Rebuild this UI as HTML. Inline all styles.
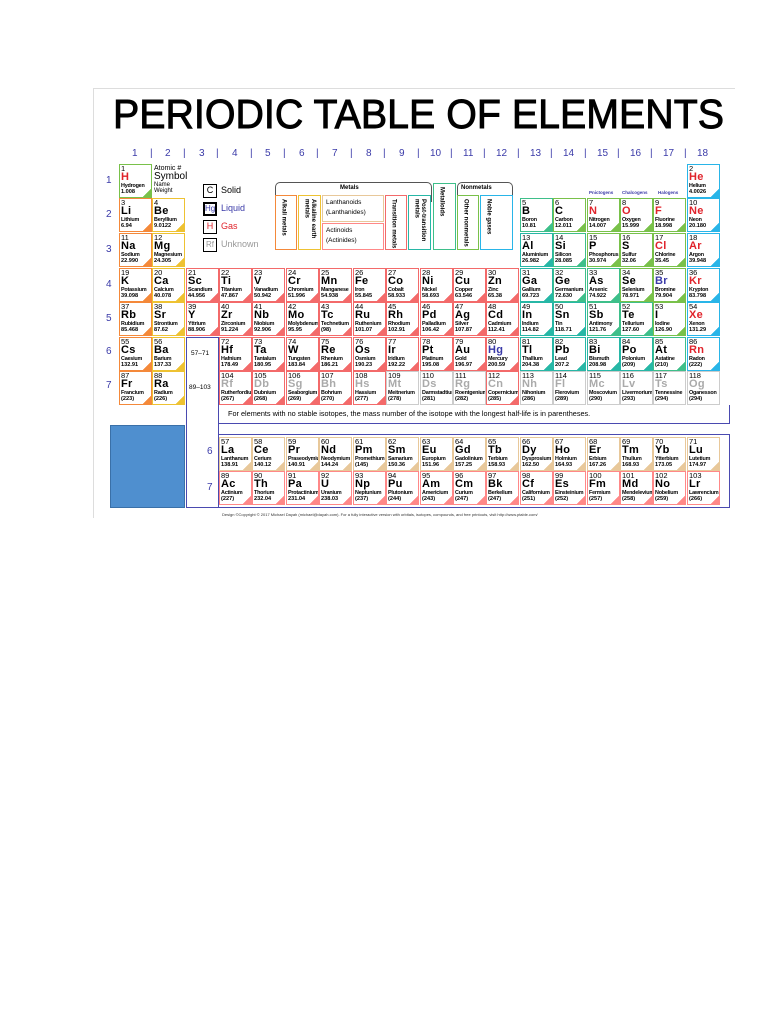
<!DOCTYPE html>
<html><head><meta charset="utf-8">
<style>
*{margin:0;padding:0;box-sizing:border-box}
body{width:768px;height:1024px;background:#fff;position:relative;overflow:hidden;font-family:"Liberation Sans",sans-serif;color:#000}
.a{position:absolute}
.c{position:absolute;width:33px;height:34px;border:1.5px solid #f36a6a;background:linear-gradient(135deg,#fff 87%,#f36a6a 87%);overflow:hidden;line-height:1}
.c b{position:absolute;left:1px;top:0px;font-size:7.5px;font-weight:normal}
.c i{position:absolute;left:1px;top:7px;font-size:11px;font-weight:bold;font-style:normal;letter-spacing:.3px}
.c s{position:absolute;left:1px;top:19px;font-size:5.4px;text-decoration:none;white-space:nowrap;letter-spacing:-.2px;font-weight:bold}
.c u{position:absolute;left:1px;top:25px;font-size:5.6px;text-decoration:none;font-weight:bold}
.al{border-color:#f4893a;background:linear-gradient(135deg,#fff 87%,#f4893a 87%)}
.ae{border-color:#eec232;background:linear-gradient(135deg,#fff 87%,#eec232 87%)}
.pt{border-color:#27b7a6;background:linear-gradient(135deg,#fff 87%,#27b7a6 87%)}
.md{border-color:#3ebf8a;background:linear-gradient(135deg,#fff 87%,#3ebf8a 87%)}
.nm{border-color:#79c14a;background:linear-gradient(135deg,#fff 87%,#79c14a 87%)}
.ng{border-color:#29b5e8;background:linear-gradient(135deg,#fff 87%,#29b5e8 87%)}
.ln{border-color:#e8c89a;background:linear-gradient(135deg,#fff 87%,#e8c89a 87%)}
.ac{border-color:#f88;background:linear-gradient(135deg,#fff 87%,#f88 87%)}
.uk{border-color:#ccc;background:#fff}
.g i{color:#e0232b}.q i{color:#3a3aa8}.u i{color:#aaa}
.gn{position:absolute;top:148px;font-size:10px;color:#3a3aa8}
.pn{position:absolute;left:106px;font-size:10px;color:#3a3aa8}
.vb{position:absolute;border:1.5px solid;background:#fff}
.vt{position:absolute;writing-mode:vertical-rl;font-size:6px;font-weight:bold;left:4px;top:3px;line-height:1.1}
</style></head><body>
<div class="a" style="left:93px;top:88px;width:642px;height:1px;background:#ddd"></div>
<div class="a" style="left:93px;top:88px;width:1px;height:430px;background:#ddd"></div>
<svg class="a" style="left:0;top:0" width="768" height="140"><text x="113" y="128" textLength="611" lengthAdjust="spacingAndGlyphs" font-family="Liberation Sans" font-size="41" stroke="#000" stroke-width="0.9">PERIODIC TABLE OF ELEMENTS</text></svg>

<div class="gn" style="left:132px">1</div><div class="gn" style="left:165px">2</div><div class="gn" style="left:199px">3</div><div class="gn" style="left:232px">4</div><div class="gn" style="left:265px">5</div><div class="gn" style="left:299px">6</div><div class="gn" style="left:332px">7</div><div class="gn" style="left:366px">8</div><div class="gn" style="left:399px">9</div><div class="gn" style="left:430px">10</div><div class="gn" style="left:463px">11</div><div class="gn" style="left:496px">12</div><div class="gn" style="left:530px">13</div><div class="gn" style="left:563px">14</div><div class="gn" style="left:597px">15</div><div class="gn" style="left:630px">16</div><div class="gn" style="left:663px">17</div><div class="gn" style="left:697px">18</div>
<div class="gn" style="left:150px">|</div><div class="gn" style="left:183px">|</div><div class="gn" style="left:216px">|</div><div class="gn" style="left:250px">|</div><div class="gn" style="left:283px">|</div><div class="gn" style="left:316px">|</div><div class="gn" style="left:350px">|</div><div class="gn" style="left:383px">|</div><div class="gn" style="left:417px">|</div><div class="gn" style="left:450px">|</div><div class="gn" style="left:483px">|</div><div class="gn" style="left:517px">|</div><div class="gn" style="left:550px">|</div><div class="gn" style="left:584px">|</div><div class="gn" style="left:617px">|</div><div class="gn" style="left:650px">|</div><div class="gn" style="left:684px">|</div>

<div class="pn" style="top:175px">1</div><div class="pn" style="top:209px">2</div><div class="pn" style="top:244px">3</div><div class="pn" style="top:279px">4</div><div class="pn" style="top:313px">5</div><div class="pn" style="top:346px">6</div><div class="pn" style="top:380px">7</div>
<div class="pn" style="left:207px;top:446px">6</div><div class="pn" style="left:207px;top:482px">7</div>

<div class="a" style="left:154px;top:165px;font-size:7px;line-height:1">Atomic #</div>
<div class="a" style="left:154px;top:172px;font-size:10px;line-height:1">Symbol</div>
<div class="a" style="left:154px;top:182px;font-size:6px;line-height:1">Name<br>Weight</div>
<div class="a" style="left:203px;top:184px;width:14px;height:14px;border:1.5px solid #000;font-size:9px;text-align:center;line-height:11px">C</div><div class="a" style="left:221px;top:185px;font-size:9px">Solid</div>
<div class="a" style="left:203px;top:202px;width:14px;height:14px;border:2px solid #000;font-size:8px;text-align:center;line-height:10px;color:#3a3aa8">Hg</div><div class="a" style="left:221px;top:203px;font-size:9px;color:#3a3aa8">Liquid</div>
<div class="a" style="left:203px;top:220px;width:14px;height:14px;border:1.5px solid #000;font-size:9px;text-align:center;line-height:11px;color:#e0232b">H</div><div class="a" style="left:221px;top:221px;font-size:9px;color:#e0232b">Gas</div>
<div class="a" style="left:203px;top:238px;width:14px;height:14px;border:1.5px solid #000;font-size:8px;text-align:center;line-height:11px;color:#999">Rf</div><div class="a" style="left:221px;top:239px;font-size:9px;color:#999">Unknown</div>

<div class="a" style="left:275px;top:182px;width:157px;height:20px;border:1.5px solid #555;border-bottom:none;border-radius:5px 5px 0 0"></div>
<div class="a" style="left:340px;top:185px;font-size:6px;font-weight:bold">Metals</div>
<div class="a" style="left:457px;top:182px;width:56px;height:20px;border:1.5px solid #555;border-bottom:none;border-radius:5px 5px 0 0"></div>
<div class="a" style="left:461px;top:185px;font-size:6px;font-weight:bold">Nonmetals</div>
<div class="vb" style="left:275px;top:195px;width:22px;height:55px;border-color:#f4893a"><span class="vt">Alkali metals</span></div>
<div class="vb" style="left:298px;top:195px;width:23px;height:55px;border-color:#eec232"><span class="vt">Alkaline earth metals</span></div>
<div class="vb" style="left:322px;top:195px;width:62px;height:27px;border-color:#e8c89a;font-size:6.5px;padding:2px 3px;line-height:1.5">Lanthanoids<br>(Lanthanides)</div>
<div class="vb" style="left:322px;top:223px;width:62px;height:27px;border-color:#f88;font-size:6.5px;padding:2px 3px;line-height:1.5">Actinoids<br>(Actinides)</div>
<div class="vb" style="left:385px;top:195px;width:22px;height:55px;border-color:#f36a6a"><span class="vt">Transition metals</span></div>
<div class="vb" style="left:408px;top:195px;width:23px;height:55px;border-color:#27b7a6"><span class="vt">Post-transition metals</span></div>
<div class="vb" style="left:433px;top:183px;width:23px;height:67px;border-color:#3ebf8a"><span class="vt">Metalloids</span></div>
<div class="vb" style="left:457px;top:195px;width:22px;height:55px;border-color:#79c14a"><span class="vt">Other nonmetals</span></div>
<div class="vb" style="left:480px;top:195px;width:33px;height:55px;border-color:#29b5e8"><span class="vt">Noble gases</span></div>
<div class="a" style="left:589px;top:190px;font-size:4.5px;color:#3a3aa8;font-weight:bold">Pnictogens</div>
<div class="a" style="left:622px;top:190px;font-size:4.5px;color:#3a3aa8;font-weight:bold">Chalcogens</div>
<div class="a" style="left:658px;top:190px;font-size:4.5px;color:#3a3aa8;font-weight:bold">Halogens</div>

<div class="a" style="left:186px;top:337px;width:33px;height:171px;border:1.5px solid #4a4ab0"></div>
<div class="a" style="left:191px;top:350px;font-size:6.5px">57–71</div>
<div class="a" style="left:189px;top:384px;font-size:6.5px">89–103</div>
<div class="a" style="left:218px;top:405px;width:512px;height:19px;border:1.5px solid #4a4ab0;border-top:none"></div>
<div class="a" style="left:228px;top:409px;font-size:7.3px">For elements with no stable isotopes, the mass number of the isotope with the longest half-life is in parentheses.</div>
<div class="a" style="left:218px;top:434px;width:512px;height:74px;border:1.5px solid #4a4ab0"></div>
<div class="a" style="left:110px;top:425px;width:75px;height:83px;background:#4f8fcf;border:1px solid #3a70a8"></div>
<div class="a" style="left:222px;top:512px;font-size:4px;color:#333">Design ©Copyright © 2017 Michael Dayah (michael@dayah.com). For a fully interactive version with orbitals, isotopes, compounds, and free printouts, visit http://www.ptable.com/</div>

<div class="c nm g" style="left:119px;top:164px"><b>1</b><i>H</i><s>Hydrogen</s><u>1.008</u></div>
<div class="c ng g" style="left:687px;top:164px"><b>2</b><i>He</i><s>Helium</s><u>4.0026</u></div>
<div class="c al" style="left:119px;top:198px"><b>3</b><i>Li</i><s>Lithium</s><u>6.94</u></div>
<div class="c ae" style="left:152px;top:198px"><b>4</b><i>Be</i><s>Beryllium</s><u>9.0122</u></div>
<div class="c md" style="left:520px;top:198px"><b>5</b><i>B</i><s>Boron</s><u>10.81</u></div>
<div class="c nm" style="left:553px;top:198px"><b>6</b><i>C</i><s>Carbon</s><u>12.011</u></div>
<div class="c nm g" style="left:587px;top:198px"><b>7</b><i>N</i><s>Nitrogen</s><u>14.007</u></div>
<div class="c nm g" style="left:620px;top:198px"><b>8</b><i>O</i><s>Oxygen</s><u>15.999</u></div>
<div class="c nm g" style="left:653px;top:198px"><b>9</b><i>F</i><s>Fluorine</s><u>18.998</u></div>
<div class="c ng g" style="left:687px;top:198px"><b>10</b><i>Ne</i><s>Neon</s><u>20.180</u></div>
<div class="c al" style="left:119px;top:233px"><b>11</b><i>Na</i><s>Sodium</s><u>22.990</u></div>
<div class="c ae" style="left:152px;top:233px"><b>12</b><i>Mg</i><s>Magnesium</s><u>24.305</u></div>
<div class="c pt" style="left:520px;top:233px"><b>13</b><i>Al</i><s>Aluminium</s><u>26.982</u></div>
<div class="c md" style="left:553px;top:233px"><b>14</b><i>Si</i><s>Silicon</s><u>28.085</u></div>
<div class="c nm" style="left:587px;top:233px"><b>15</b><i>P</i><s>Phosphorus</s><u>30.974</u></div>
<div class="c nm" style="left:620px;top:233px"><b>16</b><i>S</i><s>Sulfur</s><u>32.06</u></div>
<div class="c nm g" style="left:653px;top:233px"><b>17</b><i>Cl</i><s>Chlorine</s><u>35.45</u></div>
<div class="c ng g" style="left:687px;top:233px"><b>18</b><i>Ar</i><s>Argon</s><u>39.948</u></div>
<div class="c al" style="left:119px;top:268px"><b>19</b><i>K</i><s>Potassium</s><u>39.098</u></div>
<div class="c ae" style="left:152px;top:268px"><b>20</b><i>Ca</i><s>Calcium</s><u>40.078</u></div>
<div class="c" style="left:186px;top:268px"><b>21</b><i>Sc</i><s>Scandium</s><u>44.956</u></div>
<div class="c" style="left:219px;top:268px"><b>22</b><i>Ti</i><s>Titanium</s><u>47.867</u></div>
<div class="c" style="left:252px;top:268px"><b>23</b><i>V</i><s>Vanadium</s><u>50.942</u></div>
<div class="c" style="left:286px;top:268px"><b>24</b><i>Cr</i><s>Chromium</s><u>51.996</u></div>
<div class="c" style="left:319px;top:268px"><b>25</b><i>Mn</i><s>Manganese</s><u>54.938</u></div>
<div class="c" style="left:353px;top:268px"><b>26</b><i>Fe</i><s>Iron</s><u>55.845</u></div>
<div class="c" style="left:386px;top:268px"><b>27</b><i>Co</i><s>Cobalt</s><u>58.933</u></div>
<div class="c" style="left:420px;top:268px"><b>28</b><i>Ni</i><s>Nickel</s><u>58.693</u></div>
<div class="c" style="left:453px;top:268px"><b>29</b><i>Cu</i><s>Copper</s><u>63.546</u></div>
<div class="c" style="left:486px;top:268px"><b>30</b><i>Zn</i><s>Zinc</s><u>65.38</u></div>
<div class="c pt" style="left:520px;top:268px"><b>31</b><i>Ga</i><s>Gallium</s><u>69.723</u></div>
<div class="c md" style="left:553px;top:268px"><b>32</b><i>Ge</i><s>Germanium</s><u>72.630</u></div>
<div class="c md" style="left:587px;top:268px"><b>33</b><i>As</i><s>Arsenic</s><u>74.922</u></div>
<div class="c nm" style="left:620px;top:268px"><b>34</b><i>Se</i><s>Selenium</s><u>78.971</u></div>
<div class="c nm q" style="left:653px;top:268px"><b>35</b><i>Br</i><s>Bromine</s><u>79.904</u></div>
<div class="c ng g" style="left:687px;top:268px"><b>36</b><i>Kr</i><s>Krypton</s><u>83.798</u></div>
<div class="c al" style="left:119px;top:302px"><b>37</b><i>Rb</i><s>Rubidium</s><u>85.468</u></div>
<div class="c ae" style="left:152px;top:302px"><b>38</b><i>Sr</i><s>Strontium</s><u>87.62</u></div>
<div class="c" style="left:186px;top:302px"><b>39</b><i>Y</i><s>Yttrium</s><u>88.906</u></div>
<div class="c" style="left:219px;top:302px"><b>40</b><i>Zr</i><s>Zirconium</s><u>91.224</u></div>
<div class="c" style="left:252px;top:302px"><b>41</b><i>Nb</i><s>Niobium</s><u>92.906</u></div>
<div class="c" style="left:286px;top:302px"><b>42</b><i>Mo</i><s>Molybdenum</s><u>95.95</u></div>
<div class="c" style="left:319px;top:302px"><b>43</b><i>Tc</i><s>Technetium</s><u>(98)</u></div>
<div class="c" style="left:353px;top:302px"><b>44</b><i>Ru</i><s>Ruthenium</s><u>101.07</u></div>
<div class="c" style="left:386px;top:302px"><b>45</b><i>Rh</i><s>Rhodium</s><u>102.91</u></div>
<div class="c" style="left:420px;top:302px"><b>46</b><i>Pd</i><s>Palladium</s><u>106.42</u></div>
<div class="c" style="left:453px;top:302px"><b>47</b><i>Ag</i><s>Silver</s><u>107.87</u></div>
<div class="c" style="left:486px;top:302px"><b>48</b><i>Cd</i><s>Cadmium</s><u>112.41</u></div>
<div class="c pt" style="left:520px;top:302px"><b>49</b><i>In</i><s>Indium</s><u>114.82</u></div>
<div class="c pt" style="left:553px;top:302px"><b>50</b><i>Sn</i><s>Tin</s><u>118.71</u></div>
<div class="c md" style="left:587px;top:302px"><b>51</b><i>Sb</i><s>Antimony</s><u>121.76</u></div>
<div class="c md" style="left:620px;top:302px"><b>52</b><i>Te</i><s>Tellurium</s><u>127.60</u></div>
<div class="c nm" style="left:653px;top:302px"><b>53</b><i>I</i><s>Iodine</s><u>126.90</u></div>
<div class="c ng g" style="left:687px;top:302px"><b>54</b><i>Xe</i><s>Xenon</s><u>131.29</u></div>
<div class="c al" style="left:119px;top:337px"><b>55</b><i>Cs</i><s>Caesium</s><u>132.91</u></div>
<div class="c ae" style="left:152px;top:337px"><b>56</b><i>Ba</i><s>Barium</s><u>137.33</u></div>
<div class="c" style="left:219px;top:337px"><b>72</b><i>Hf</i><s>Hafnium</s><u>178.49</u></div>
<div class="c" style="left:252px;top:337px"><b>73</b><i>Ta</i><s>Tantalum</s><u>180.95</u></div>
<div class="c" style="left:286px;top:337px"><b>74</b><i>W</i><s>Tungsten</s><u>183.84</u></div>
<div class="c" style="left:319px;top:337px"><b>75</b><i>Re</i><s>Rhenium</s><u>186.21</u></div>
<div class="c" style="left:353px;top:337px"><b>76</b><i>Os</i><s>Osmium</s><u>190.23</u></div>
<div class="c" style="left:386px;top:337px"><b>77</b><i>Ir</i><s>Iridium</s><u>192.22</u></div>
<div class="c" style="left:420px;top:337px"><b>78</b><i>Pt</i><s>Platinum</s><u>195.08</u></div>
<div class="c" style="left:453px;top:337px"><b>79</b><i>Au</i><s>Gold</s><u>196.97</u></div>
<div class="c q" style="left:486px;top:337px"><b>80</b><i>Hg</i><s>Mercury</s><u>200.59</u></div>
<div class="c pt" style="left:520px;top:337px"><b>81</b><i>Tl</i><s>Thallium</s><u>204.38</u></div>
<div class="c pt" style="left:553px;top:337px"><b>82</b><i>Pb</i><s>Lead</s><u>207.2</u></div>
<div class="c pt" style="left:587px;top:337px"><b>83</b><i>Bi</i><s>Bismuth</s><u>208.98</u></div>
<div class="c pt" style="left:620px;top:337px"><b>84</b><i>Po</i><s>Polonium</s><u>(209)</u></div>
<div class="c md" style="left:653px;top:337px"><b>85</b><i>At</i><s>Astatine</s><u>(210)</u></div>
<div class="c ng g" style="left:687px;top:337px"><b>86</b><i>Rn</i><s>Radon</s><u>(222)</u></div>
<div class="c al" style="left:119px;top:371px"><b>87</b><i>Fr</i><s>Francium</s><u>(223)</u></div>
<div class="c ae" style="left:152px;top:371px"><b>88</b><i>Ra</i><s>Radium</s><u>(226)</u></div>
<div class="c u" style="left:219px;top:371px"><b>104</b><i>Rf</i><s>Rutherfordium</s><u>(267)</u></div>
<div class="c u" style="left:252px;top:371px"><b>105</b><i>Db</i><s>Dubnium</s><u>(268)</u></div>
<div class="c u" style="left:286px;top:371px"><b>106</b><i>Sg</i><s>Seaborgium</s><u>(269)</u></div>
<div class="c u" style="left:319px;top:371px"><b>107</b><i>Bh</i><s>Bohrium</s><u>(270)</u></div>
<div class="c u" style="left:353px;top:371px"><b>108</b><i>Hs</i><s>Hassium</s><u>(277)</u></div>
<div class="c uk u" style="left:386px;top:371px"><b>109</b><i>Mt</i><s>Meitnerium</s><u>(278)</u></div>
<div class="c uk u" style="left:420px;top:371px"><b>110</b><i>Ds</i><s>Darmstadtium</s><u>(281)</u></div>
<div class="c uk u" style="left:453px;top:371px"><b>111</b><i>Rg</i><s>Roentgenium</s><u>(282)</u></div>
<div class="c u" style="left:486px;top:371px"><b>112</b><i>Cn</i><s>Copernicium</s><u>(285)</u></div>
<div class="c uk u" style="left:520px;top:371px"><b>113</b><i>Nh</i><s>Nihonium</s><u>(286)</u></div>
<div class="c uk u" style="left:553px;top:371px"><b>114</b><i>Fl</i><s>Flerovium</s><u>(289)</u></div>
<div class="c uk u" style="left:587px;top:371px"><b>115</b><i>Mc</i><s>Moscovium</s><u>(290)</u></div>
<div class="c uk u" style="left:620px;top:371px"><b>116</b><i>Lv</i><s>Livermorium</s><u>(293)</u></div>
<div class="c uk u" style="left:653px;top:371px"><b>117</b><i>Ts</i><s>Tennessine</s><u>(294)</u></div>
<div class="c uk u" style="left:687px;top:371px"><b>118</b><i>Og</i><s>Oganesson</s><u>(294)</u></div>
<div class="c ln" style="left:219px;top:437px"><b>57</b><i>La</i><s>Lanthanum</s><u>138.91</u></div>
<div class="c ln" style="left:252px;top:437px"><b>58</b><i>Ce</i><s>Cerium</s><u>140.12</u></div>
<div class="c ln" style="left:286px;top:437px"><b>59</b><i>Pr</i><s>Praseodymium</s><u>140.91</u></div>
<div class="c ln" style="left:319px;top:437px"><b>60</b><i>Nd</i><s>Neodymium</s><u>144.24</u></div>
<div class="c ln" style="left:353px;top:437px"><b>61</b><i>Pm</i><s>Promethium</s><u>(145)</u></div>
<div class="c ln" style="left:386px;top:437px"><b>62</b><i>Sm</i><s>Samarium</s><u>150.36</u></div>
<div class="c ln" style="left:420px;top:437px"><b>63</b><i>Eu</i><s>Europium</s><u>151.96</u></div>
<div class="c ln" style="left:453px;top:437px"><b>64</b><i>Gd</i><s>Gadolinium</s><u>157.25</u></div>
<div class="c ln" style="left:486px;top:437px"><b>65</b><i>Tb</i><s>Terbium</s><u>158.93</u></div>
<div class="c ln" style="left:520px;top:437px"><b>66</b><i>Dy</i><s>Dysprosium</s><u>162.50</u></div>
<div class="c ln" style="left:553px;top:437px"><b>67</b><i>Ho</i><s>Holmium</s><u>164.93</u></div>
<div class="c ln" style="left:587px;top:437px"><b>68</b><i>Er</i><s>Erbium</s><u>167.26</u></div>
<div class="c ln" style="left:620px;top:437px"><b>69</b><i>Tm</i><s>Thulium</s><u>168.93</u></div>
<div class="c ln" style="left:653px;top:437px"><b>70</b><i>Yb</i><s>Ytterbium</s><u>173.05</u></div>
<div class="c ln" style="left:687px;top:437px"><b>71</b><i>Lu</i><s>Lutetium</s><u>174.97</u></div>
<div class="c ac" style="left:219px;top:471px"><b>89</b><i>Ac</i><s>Actinium</s><u>(227)</u></div>
<div class="c ac" style="left:252px;top:471px"><b>90</b><i>Th</i><s>Thorium</s><u>232.04</u></div>
<div class="c ac" style="left:286px;top:471px"><b>91</b><i>Pa</i><s>Protactinium</s><u>231.04</u></div>
<div class="c ac" style="left:319px;top:471px"><b>92</b><i>U</i><s>Uranium</s><u>238.03</u></div>
<div class="c ac" style="left:353px;top:471px"><b>93</b><i>Np</i><s>Neptunium</s><u>(237)</u></div>
<div class="c ac" style="left:386px;top:471px"><b>94</b><i>Pu</i><s>Plutonium</s><u>(244)</u></div>
<div class="c ac" style="left:420px;top:471px"><b>95</b><i>Am</i><s>Americium</s><u>(243)</u></div>
<div class="c ac" style="left:453px;top:471px"><b>96</b><i>Cm</i><s>Curium</s><u>(247)</u></div>
<div class="c ac" style="left:486px;top:471px"><b>97</b><i>Bk</i><s>Berkelium</s><u>(247)</u></div>
<div class="c ac" style="left:520px;top:471px"><b>98</b><i>Cf</i><s>Californium</s><u>(251)</u></div>
<div class="c ac" style="left:553px;top:471px"><b>99</b><i>Es</i><s>Einsteinium</s><u>(252)</u></div>
<div class="c ac" style="left:587px;top:471px"><b>100</b><i>Fm</i><s>Fermium</s><u>(257)</u></div>
<div class="c ac" style="left:620px;top:471px"><b>101</b><i>Md</i><s>Mendelevium</s><u>(258)</u></div>
<div class="c ac" style="left:653px;top:471px"><b>102</b><i>No</i><s>Nobelium</s><u>(259)</u></div>
<div class="c ac" style="left:687px;top:471px"><b>103</b><i>Lr</i><s>Lawrencium</s><u>(266)</u></div>
</body></html>
